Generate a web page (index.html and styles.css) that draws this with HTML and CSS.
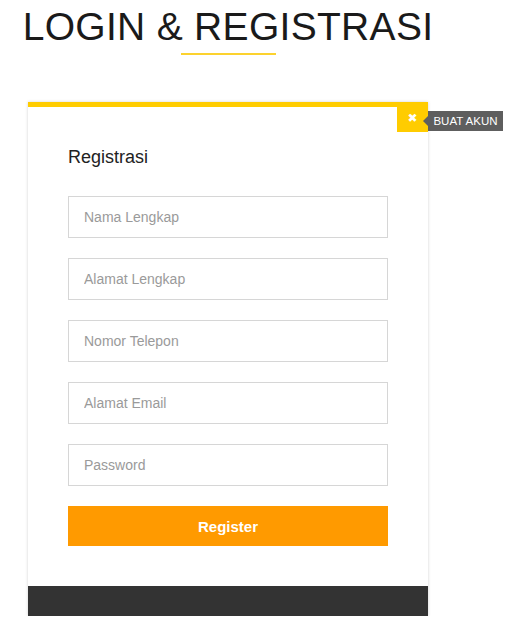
FILE: index.html
```html
<!DOCTYPE html>
<html lang="id">
<head>
<meta charset="utf-8">
<title>Login &amp; Registrasi</title>
<link rel="stylesheet" href="styles.css">
</head>
<body>
<div class="page">
  <header class="title-block">
    <h1 class="title">LOGIN &amp; REGISTRASI</h1>
    <div class="title-line"></div>
  </header>
  <section class="card">
    <button class="close-btn" type="button" aria-label="Tutup">&#10006;</button>
    <div class="tooltip">BUAT AKUN</div>
    <form class="form">
      <h2 class="form-title">Registrasi</h2>
      <input class="field" type="text" placeholder="Nama Lengkap">
      <input class="field" type="text" placeholder="Alamat Lengkap">
      <input class="field" type="text" placeholder="Nomor Telepon">
      <input class="field" type="email" placeholder="Alamat Email">
      <input class="field" type="password" placeholder="Password">
      <button class="submit" type="button">Register</button>
    </form>
    <div class="card-footer"></div>
  </section>
</div>
</body>
</html>
```
FILE: styles.css
```css
* { box-sizing: border-box; }
html, body { margin: 0; padding: 0; background: #fff; }
body { font-family: "Liberation Sans", Arial, sans-serif; }

.page {
  width: 400px;
  margin-left: 28px;
  padding-top: 5px;
}

.title-block {
  display: flex;
  flex-direction: column;
  align-items: center;
}
.title {
  margin: 0;
  font-size: 39px;
  line-height: 44px;
  font-weight: normal;
  letter-spacing: 0.3px;
  white-space: nowrap;
  color: #1a1a1a;
}
.title-line {
  width: 95px;
  height: 2px;
  background: #fcd22e;
  margin-top: 4px;
}

.card {
  position: relative;
  margin-top: 47px;
  width: 400px;
  background: #fff;
  border-top: 5px solid #ffcc00;
  box-shadow: 0 0 3px rgba(0, 0, 0, 0.18);
}

.close-btn {
  position: absolute;
  top: -5px;
  right: 0;
  width: 31px;
  height: 30px;
  border: 0;
  padding: 0;
  background: #ffcc00;
  color: #fff;
  font-size: 12px;
  line-height: 32px;
  text-align: center;
  font-family: "DejaVu Sans", sans-serif;
}

.tooltip {
  position: absolute;
  top: 4px;
  left: 100%;
  height: 20px;
  width: 75px;
  background: #5e5e5e;
  color: #fff;
  font-size: 11.5px;
  line-height: 20px;
  text-align: center;
  white-space: nowrap;
}
.tooltip::before {
  content: "";
  position: absolute;
  left: -5px;
  top: 5px;
  border-top: 5px solid transparent;
  border-bottom: 5px solid transparent;
  border-right: 5px solid #5e5e5e;
}

.form {
  display: flex;
  flex-direction: column;
  padding: 40px 40px 40px;
  margin: 0;
}
.form-title {
  margin: 0 0 29px;
  font-size: 18px;
  line-height: 20px;
  font-weight: normal;
  color: #222;
}
.field {
  display: block;
  width: 320px;
  height: 42px;
  margin: 0 0 20px;
  padding: 0 15px;
  border: 1px solid #d6d6d6;
  border-radius: 0;
  font-family: "Liberation Sans", Arial, sans-serif;
  font-size: 14px;
  color: #333;
  background: #fff;
  outline: none;
}
.field::placeholder { color: #9a9a9a; opacity: 1; }

.submit {
  width: 320px;
  height: 40px;
  border: 0;
  padding: 0;
  background: #ff9a00;
  color: #fff;
  font-family: "Liberation Sans", Arial, sans-serif;
  font-weight: bold;
  font-size: 15px;
  cursor: pointer;
}

.card-footer {
  height: 30px;
  background: #333333;
}
```
